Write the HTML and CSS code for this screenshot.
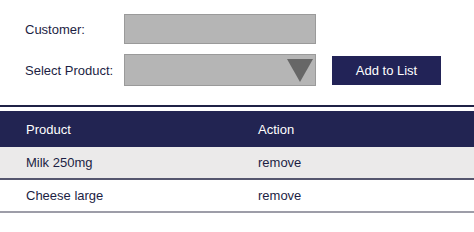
FILE: index.html
```html
<!DOCTYPE html>
<html>
<head>
<meta charset="utf-8">
<link rel="stylesheet" href="styles.css">
</head>
<body>
<div class="form">
  <div class="row row-customer">
    <label class="label">Customer:</label>
    <div class="input"></div>
  </div>
  <div class="row row-product">
    <label class="label">Select Product:</label>
    <div class="select"><span class="arrow"></span></div>
    <button class="btn">Add to List</button>
  </div>
</div>
<div class="divider"></div>
<table class="list">
  <thead>
    <tr><th class="col-product">Product</th><th>Action</th></tr>
  </thead>
  <tbody>
    <tr class="odd"><td>Milk 250mg</td><td>remove</td></tr>
    <tr><td>Cheese large</td><td>remove</td></tr>
  </tbody>
</table>
</body>
</html>
```
FILE: styles.css
```css
html, body {
  margin: 0;
  padding: 0;
  background: #fff;
}
body {
  font-family: "Liberation Sans", Arial, sans-serif;
  font-size: 13px;
  color: #1c1e44;
  width: 474px;
}
.form {
  padding: 14px 0 0 25px;
  display: flex;
  flex-direction: column;
  gap: 10px;
}
.row {
  display: flex;
  align-items: center;
}
.row-customer { height: 30px; }
.row-product { height: 32px; }
.label {
  width: 99px;
}
.input, .select {
  box-sizing: border-box;
  width: 192px;
  background: #b5b5b5;
  border: 1px solid #9a9a9a;
}
.input { height: 30px; }
.select {
  height: 32px;
  position: relative;
}
.arrow {
  position: absolute;
  right: 2px;
  top: 4px;
  width: 0;
  height: 0;
  border-left: 13px solid transparent;
  border-right: 13px solid transparent;
  border-top: 23px solid #676767;
}
.btn {
  margin-left: 16px;
  width: 109px;
  height: 29px;
  border: none;
  background: #222357;
  color: #fff;
  font-family: "Liberation Sans", Arial, sans-serif;
  font-size: 13px;
  padding: 0;
}
.divider {
  margin-top: 19px;
  height: 2px;
  background: #1f2146;
}
.list {
  margin-top: 4px;
  width: 100%;
  border-collapse: collapse;
}
.list th, .list td {
  text-align: left;
  padding: 0 0 0 26px;
  font-weight: normal;
}
.list th {
  background: #222452;
  color: #fff;
  height: 36px;
}
.col-product { width: 206px; }
.list td {
  height: 31px;
  border-bottom: 2px solid #9d9da8;
}
.list tr.odd td {
  background: #ebeaea;
  border-bottom-color: #55566e;
}
```
